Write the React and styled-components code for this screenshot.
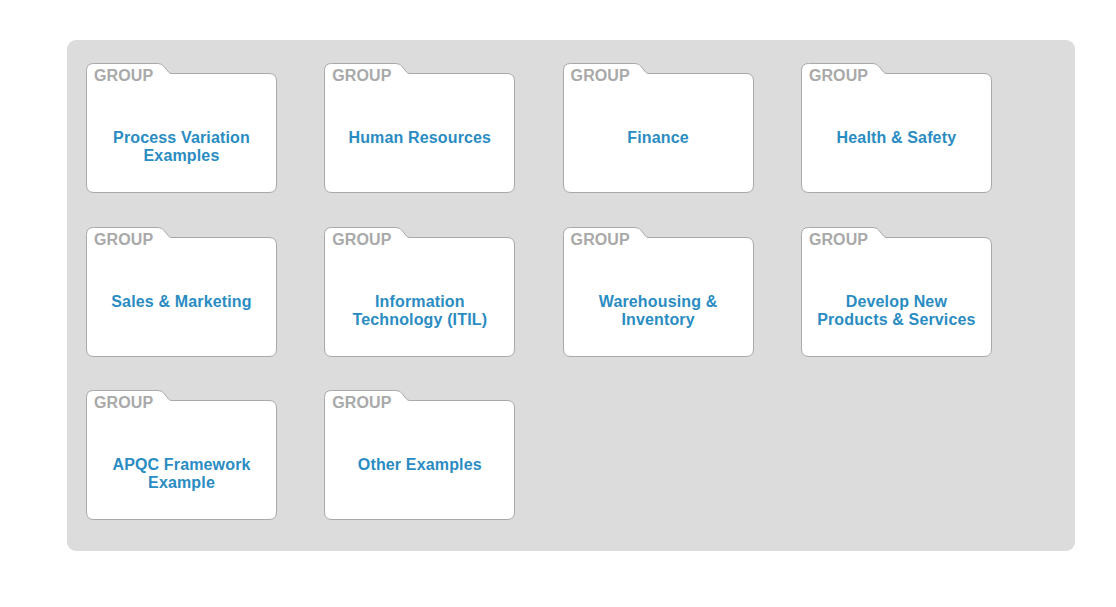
import React from 'react'
import styled, { createGlobalStyle } from 'styled-components'

const GlobalStyle = createGlobalStyle`
  body {
    margin: 0;
    background: #ffffff;
    font-family: "Liberation Sans", Arial, sans-serif;
  }
`

const Panel = styled.div`
  margin: 40px 0 0 67px;
  width: 1008px;
  height: 511px;
  box-sizing: border-box;
  padding: 23px 19px 31px;
  background: #dcdcdc;
  border-radius: 9px;
`

const Grid = styled.div`
  display: grid;
  grid-template-columns: repeat(4, 191px);
  column-gap: 47.3px;
  row-gap: 33.5px;
`

const Card = styled.div`
  position: relative;
  width: 191px;
  height: 130px;
  display: flex;
  flex-direction: column;
  align-items: stretch;
  cursor: pointer;
`

const Shape = styled.svg`
  position: absolute;
  inset: 0;
  z-index: 0;
  overflow: visible;
`

const Label = styled.div`
  position: relative;
  padding: 4px 0 0 8px;
  font-size: 16px;
  line-height: 18px;
  font-weight: bold;
  letter-spacing: 0.1px;
  color: #a9a9a9;
`

const Title = styled.div`
  position: relative;
  margin-top: 44px;
  padding: 0 12px;
  text-align: center;
  font-size: 16px;
  line-height: 18px;
  font-weight: bold;
  letter-spacing: 0.15px;
  color: #2a8cc2;
`

const FolderShape = () => (
  <Shape width="191" height="130" viewBox="0 0 191 130">
    <path
      d="M0.5,122 V7.5 Q0.5,0.5 7.5,0.5 H72 Q76.5,0.5 78.5,4 L82.5,9 Q83.5,10.5 86,10.5 H183 Q190.5,10.5 190.5,18 V122 Q190.5,129.5 183,129.5 H8 Q0.5,129.5 0.5,122 Z"
      fill="#ffffff"
      stroke="#a9a9a9"
      strokeWidth="1"
    />
  </Shape>
)

const groups = [
  'Process Variation Examples',
  'Human Resources',
  'Finance',
  'Health & Safety',
  'Sales & Marketing',
  'Information Technology (ITIL)',
  'Warehousing & Inventory',
  'Develop New Products & Services',
  'APQC Framework Example',
  'Other Examples',
]

export default function App() {
  return (
    <>
      <GlobalStyle />
      <Panel>
        <Grid>
          {groups.map((name) => (
            <Card key={name}>
              <FolderShape />
              <Label>GROUP</Label>
              <Title>{name}</Title>
            </Card>
          ))}
        </Grid>
      </Panel>
    </>
  )
}
